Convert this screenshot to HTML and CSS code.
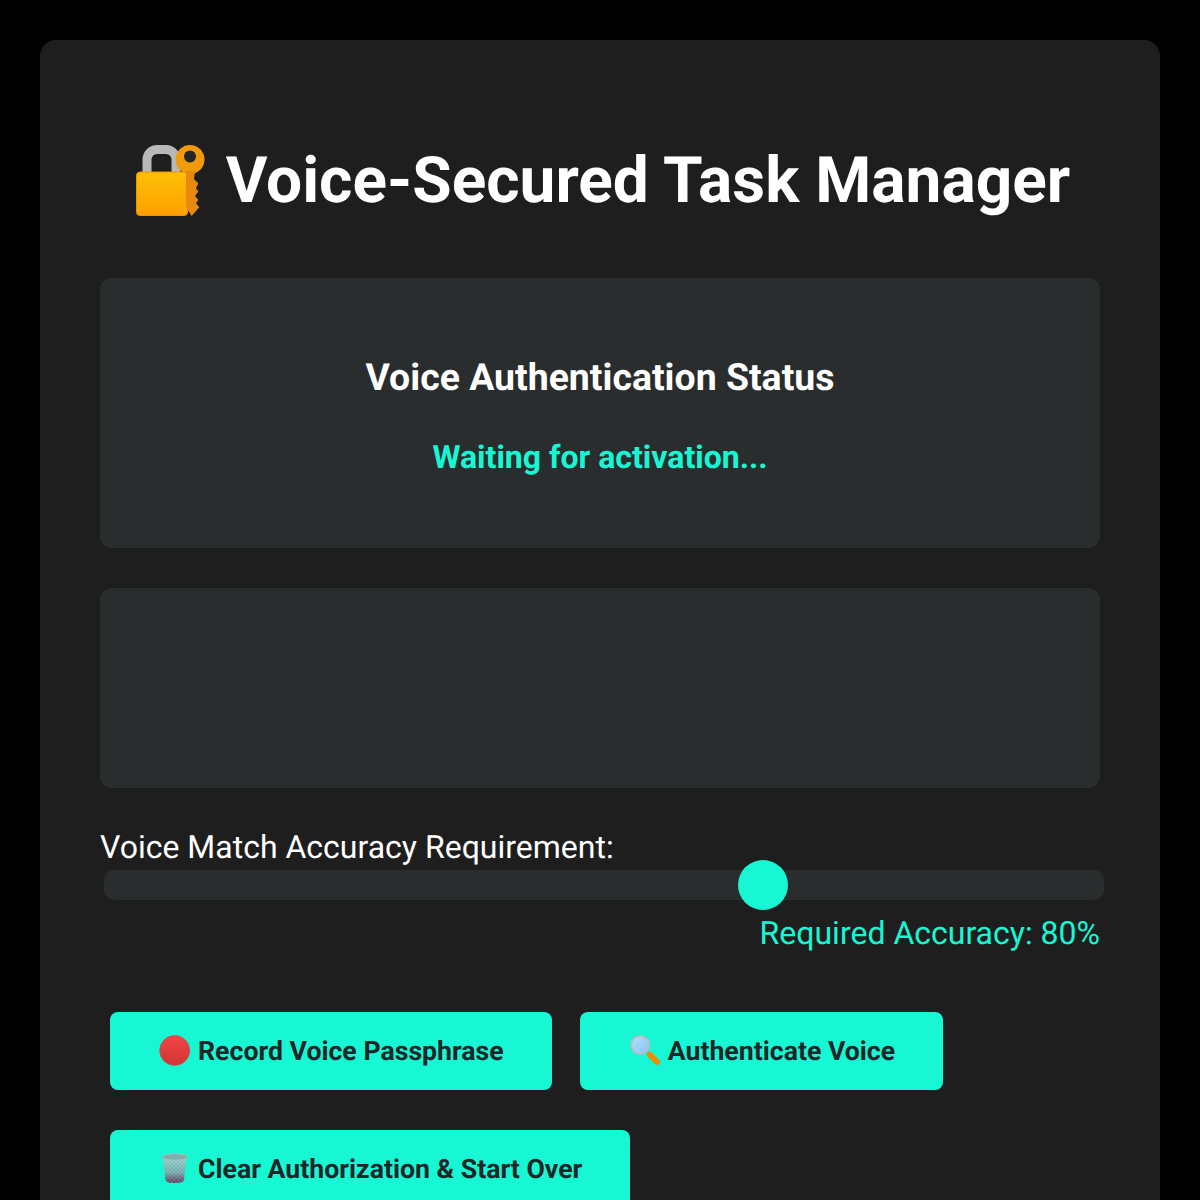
FILE: index.html
```html
<!DOCTYPE html>
<html lang="en">
<head>
<meta charset="utf-8">
<title>Voice-Secured Task Manager</title>
<link rel="stylesheet" href="styles.css">
</head>
<body>
<main class="container">
  <h1 class="title"><svg class="icon-lock" viewBox="-6 0 80 71" role="img" aria-label="locked with key">
      <defs>
        <linearGradient id="lockBody" x1="0" y1="0" x2="0" y2="1">
          <stop offset="0" stop-color="#ffc107"/>
          <stop offset="1" stop-color="#ffa000"/>
        </linearGradient>
      </defs>
      <path d="M11 28V14a10 10 0 0 1 10-9.500h9a10 10 0 0 1 10 9.500V28" fill="none" stroke="#b8b8b8" stroke-width="9"/>
      <rect x="0.500" y="27" width="51" height="43.500" rx="3.500" fill="url(#lockBody)" stroke="#f09000" stroke-width="1"/>
      <circle cx="54" cy="14.500" r="14.500" fill="#f09a0d"/>
      <circle cx="54" cy="11.500" r="6" fill="#262626"/>
      <path d="M50 26h9l-1 8.300 4.300 4-2.300 5 2.300 3.300-3.300 4.400 3.300 4-2.300 3.300 3.300 4-7.600 8.700-5.700-8.700z" fill="#e88a10"/>
    </svg> Voice-Secured Task Manager</h1>
  <section class="panel status">
    <h2 class="status-title">Voice Authentication Status</h2>
    <p class="status-text">Waiting for activation...</p>
  </section>
  <section class="panel empty"></section>
  <div class="accuracy">
    <label class="accuracy-label" for="acc">Voice Match Accuracy Requirement:</label>
    <input class="slider" id="acc" type="range" min="50" max="94.95" step="0.01" value="80">
    <div class="accuracy-value">Required Accuracy: 80%</div>
  </div>
  <div class="actions">
    <button class="btn"><svg class="icon" viewBox="0 0 33 33" role="img" aria-label="red circle">
        <defs>
          <linearGradient id="redDot" x1="0" y1="0" x2="0" y2="1">
            <stop offset="0" stop-color="#f04545"/>
            <stop offset="1" stop-color="#d23434"/>
          </linearGradient>
        </defs>
        <circle cx="16.500" cy="16.500" r="15" fill="url(#redDot)" stroke="#c8504c" stroke-width="0.800"/>
      </svg> Record Voice Passphrase</button>
    <button class="btn"><svg class="icon" viewBox="0 0 33 33" role="img" aria-label="magnifying glass">
        <defs>
          <linearGradient id="glass" x1="0" y1="0" x2="1" y2="1">
            <stop offset="0" stop-color="#b3e0fb"/>
            <stop offset="1" stop-color="#82c4f5"/>
          </linearGradient>
        </defs>
        <path d="M19 18l3 3" stroke="#9e9e9e" stroke-width="3.500"/>
        <path d="M22 21l7 7" stroke="#f08c00" stroke-width="6" stroke-linecap="round"/>
        <circle cx="12" cy="11" r="9" fill="url(#glass)" stroke="#b6bfc4" stroke-width="2"/>
      </svg> Authenticate Voice</button>
    <button class="btn"><svg class="icon" viewBox="0 0 33 33" role="img" aria-label="wastebasket">
        <defs>
          <linearGradient id="bin" x1="0" y1="0" x2="0" y2="1">
            <stop offset="0" stop-color="#8cd0c8"/>
            <stop offset="0.600" stop-color="#6fa6a8"/>
            <stop offset="0.850" stop-color="#5c5a6c"/>
            <stop offset="1" stop-color="#5c3d55"/>
          </linearGradient>
          <pattern id="mesh" width="4" height="4" patternUnits="userSpaceOnUse">
            <path d="M0 0l4 4M4 0L0 4" stroke="#d4e4e4" stroke-width="0.500" stroke-opacity="0.500"/>
          </pattern>
        </defs>
        <path d="M4.500 5l3 23.500c.3 1.700 4 2.500 9 2.500s8.800-.8 9.100-2.500l3-23.500z" fill="url(#bin)"/>
        <path d="M4.500 5l3 23.500c.3 1.700 4 2.500 9 2.500s8.800-.8 9.100-2.500l3-23.500z" fill="url(#mesh)"/>
        <ellipse cx="16.700" cy="5" rx="12.500" ry="3.200" fill="#7fb0ae" stroke="#a9bcbc" stroke-width="1"/>
      </svg> Clear Authorization &amp; Start Over</button>
  </div>
</main>
</body>
</html>
```
FILE: styles.css
```css
* { box-sizing: border-box; }
html, body { margin: 0; background: #000; }
body {
  padding: 40px;
  font-family: Roboto, sans-serif;
  color: #fff;
  height: 1200px;
  overflow: hidden;
  text-rendering: geometricPrecision;
}
.container {
  background: #1e1e1e;
  border-radius: 16px;
  padding: 102px 60px 60px;
}
.title {
  margin: 0 0 58px;
  height: 78px;
  font-size: 64px;
  line-height: 78px;
  font-weight: 700;
  text-align: center;
}
.icon-lock {
  width: 80px;
  height: 71px;
  vertical-align: -14px;
}
.panel {
  background: #2a2d2e;
  border-radius: 12px;
  margin-bottom: 40px;
}
.status { padding: 77px 60px; height: 270px; text-align: center; }
.status-title { margin: 0 0 36px; font-size: 37.44px; line-height: 46px; font-weight: 700; }
.status-text { margin: 0; font-size: 32px; line-height: 40px; font-weight: 700; color: #18f7d4; }
.empty { height: 200px; }
.accuracy { font-size: 32px; font-weight: 400; }
.accuracy-label { display: block; line-height: 38px; margin-top: 40px; }
.slider {
  -webkit-appearance: none;
  appearance: none;
  display: block;
  width: 100%;
  height: 30px;
  margin: 4px 0 14px 4px;
  background: #2a2d2e;
  border-radius: 10px;
  outline: none;
}
.slider::-webkit-slider-thumb {
  -webkit-appearance: none;
  width: 50px;
  height: 50px;
  border-radius: 50%;
  background: #18f7d4;
  border: 0;
}
.accuracy-value { text-align: right; color: #18f7d4; line-height: 38px; }
.actions { display: flex; flex-wrap: wrap; gap: 40px 28px; padding: 60px 10px 0; }
.btn {
  border: 0;
  border-radius: 8px;
  background: #18f7d4;
  color: #1e2628;
  font: 700 26.67px/38px Roboto, sans-serif;
  text-rendering: geometricPrecision;
  padding: 20px 48px;
  height: 78px;
}
.icon {
  width: 33.4px;
  height: 33px;
  vertical-align: -7px;
}
```
